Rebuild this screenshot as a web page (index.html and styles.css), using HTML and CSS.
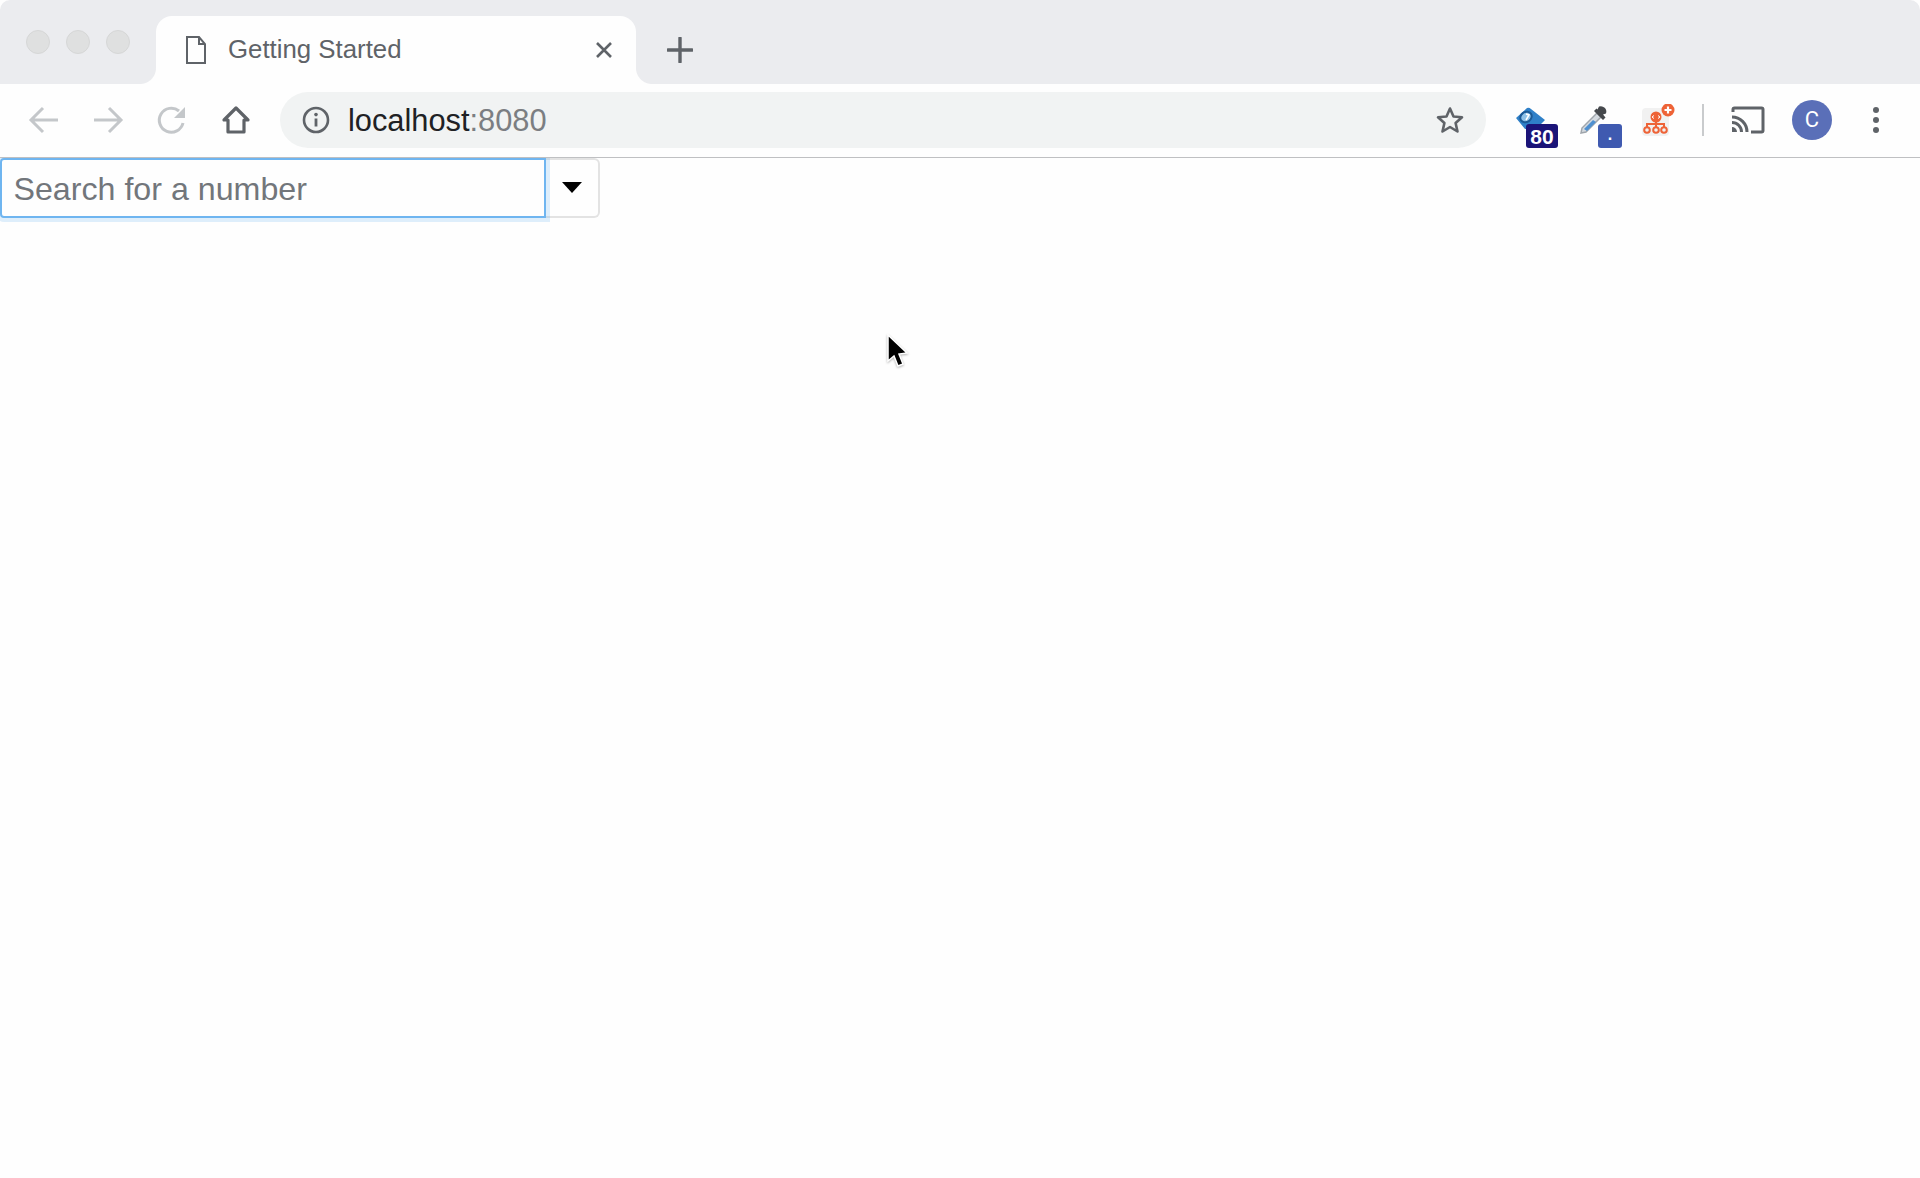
FILE: index.html
```html
<!DOCTYPE html>
<html lang="en">
<head>
<meta charset="utf-8">
<title>Getting Started</title>
<link rel="stylesheet" href="styles.css">
</head>
<body>
<header class="chrome">
  <div class="tabstrip">
    <div class="lights"><span class="light"></span><span class="light"></span><span class="light"></span></div>
    <div class="tab">
      <svg class="doc" width="20" height="28" viewBox="0 0 20 28"><path d="M1 1h12l6 7v19H1zM13 1v7h6" fill="none" stroke="#5f6368" stroke-width="2"/></svg>
      <span class="tab-title">Getting Started</span>
      <svg class="tab-close" width="18" height="18" viewBox="0 0 18 18"><path d="M2 2l14 14M16 2L2 16" stroke="#5f6368" stroke-width="2.6" fill="none"/></svg>
    </div>
    <svg class="newtab" width="26" height="26" viewBox="0 0 26 26"><path d="M13 1v24M1 13h24" stroke="#5f6368" stroke-width="3.4" fill="none" stroke-linecap="round"/></svg>
  </div>
  <div class="toolbar">
    <span class="btn"><svg width="32" height="32" viewBox="0 0 32 32"><path d="M30 16H4M15 4L3 16l12 12" stroke="#c4c7ca" stroke-width="3" fill="none"/></svg></span>
    <span class="btn"><svg width="32" height="32" viewBox="0 0 32 32"><path d="M2 16h26M17 4l12 12-12 12" stroke="#c4c7ca" stroke-width="3" fill="none"/></svg></span>
    <span class="btn"><svg width="32" height="32" viewBox="0 0 32 32"><path d="M27 19A12 12 0 1 1 23 7" stroke="#c4c7ca" stroke-width="3" fill="none"/><path d="M29 3v11H18z" fill="#c4c7ca"/></svg></span>
    <span class="btn"><svg width="30" height="30" viewBox="0 0 30 30"><path d="M15 3L3 15h4v12h16V15h4z" stroke="#5f6368" stroke-width="3.2" stroke-linejoin="round" fill="none"/></svg></span>
    <div class="omnibox">
      <svg class="info" width="28" height="28" viewBox="0 0 28 28"><circle cx="14" cy="14" r="12" stroke="#5f6368" stroke-width="2.6" fill="none"/><path d="M14 12.500V20.500" stroke="#5f6368" stroke-width="2.8"/><circle cx="14" cy="8.600" r="1.800" fill="#5f6368"/></svg>
      <span class="url"><span class="host">localhost</span><span class="port">:8080</span></span>
      <svg class="star" width="30" height="30" viewBox="0 0 30 30"><path d="M15 3.500l3.500 8 8.500.8-6.400 5.700 1.900 8.500-7.500-4.500-7.500 4.500 1.900-8.500L3 12.300l8.500-.8z" stroke="#5f6368" stroke-width="2.6" stroke-linejoin="round" fill="none"/></svg>
    </div>
    <div class="extensions">
      <span class="btn ext">
        <svg class="ico-lens" width="30" height="24" viewBox="0 0 30 24"><path d="M0 11L11 1q2-1 4 1l14 11-9 9H9z" fill="#2f80c8"/><ellipse cx="10" cy="10" rx="6" ry="5" transform="rotate(-35 10 10)" fill="#8fc2e8" stroke="#1c5a96" stroke-width="2"/><path d="M10 7l3 1-3 5" stroke="#fff" stroke-width="1.5" fill="none"/></svg>
        <span class="badge badge-navy">80</span>
      </span>
      <span class="btn ext">
        <svg class="ico-dropper" width="30" height="30" viewBox="0 0 30 30"><path d="M17 9L2 24l-1 5 5-1 15-15z" fill="#d4dae0" stroke="#a0a6ac" stroke-width="1.500"/><path d="M4 25l9-9 3 2-9 9z" fill="#4f90d0"/><path d="M14 7l9 9 2.500-2.500-2.500-3 3-1a5.500 5.500 0 0 0-7-7l-1.500 3-1-1z" fill="#45484c"/></svg>
        <span class="badge badge-blue">.</span>
      </span>
      <span class="btn ext">
        <svg class="ico-tree" width="33" height="32" viewBox="0 0 33 32"><rect x="0" y="4" width="27" height="28" rx="4" fill="#f1f1f1"/><g fill="none" stroke="#ee6337" stroke-width="2"><circle cx="5" cy="26" r="2.800"/><circle cx="14" cy="26" r="2.800"/><circle cx="22" cy="26" r="2.800"/><path d="M14 16v7M5 23v-3h17v3"/></g><circle cx="14" cy="13" r="5.500" fill="#ee6337"/><path d="M12 11.500l-2 1.500 2 1.500M16 11.500l2 1.500-2 1.500" stroke="#fff" fill="none"/><circle cx="26" cy="6" r="6.500" fill="#ee6337"/><path d="M26 2.500v7M22.500 6h7" stroke="#fff" stroke-width="2.200"/></svg>
      </span>
    </div>
    <span class="divider"></span>
    <span class="btn"><svg width="34" height="28" viewBox="0 0 34 28"><path d="M2 6V3.500A1.500 1.500 0 0 1 3.500 2h27A1.500 1.500 0 0 1 32 3.500v21a1.500 1.500 0 0 1-1.500 1.500H20" stroke="#5f6368" stroke-width="3" fill="none"/><path d="M1 11a15 15 0 0 1 15 15M1 16.500A9.500 9.500 0 0 1 10.500 26" stroke="#5f6368" stroke-width="3" fill="none"/><path d="M1 21a5 5 0 0 1 5 5H1z" fill="#5f6368"/></svg></span>
    <span class="btn"><span class="avatar">C</span></span>
    <span class="btn"><span class="dots"><i></i><i></i><i></i></span></span>
  </div>
</header>
<main class="page">
  <div class="combo">
    <input class="combo-input" type="text" placeholder="Search for a number">
    <button class="combo-toggle" type="button" aria-label="Toggle"><span class="caret"></span></button>
  </div>
  <svg class="cursor" width="24" height="36" viewBox="0 0 24 36"><path d="M3 1v26l6-5 4 10 5-2-4-10 8-1z" fill="#000" stroke="#fff" stroke-width="1.5"/></svg>
</main>
</body>
</html>
```
FILE: styles.css
```css
* { box-sizing: border-box; }
html, body { margin: 0; height: 100%; }
body {
  background: #fefefe;
  font-family: "Liberation Sans", Arial, sans-serif;
  display: flex;
  flex-direction: column;
  overflow: hidden;
}
.chrome { position: relative; z-index: 2; background: #fefefe; border-bottom: 1px solid #bfc0c2; }
.tabstrip { height: 84px; background: #ebecef; display: flex; align-items: flex-start; border-radius: 10px 10px 0 0; }
.lights { width: 156px; height: 84px; padding: 0 26px; display: flex; gap: 16px; align-items: center; }
.light { width: 24px; height: 24px; border-radius: 50%; background: #dfe0e0; border: 1px solid #d6d7d7; }
.tab {
  position: relative; width: 480px; height: 68px; margin-top: 16px; background: #fefefe;
  border-radius: 16px 16px 0 0; display: flex; align-items: center; padding: 0 23px 0 30px;
}
.tab::before, .tab::after { content: ""; position: absolute; bottom: 0; width: 16px; height: 16px; }
.tab::before { left: -16px; background: radial-gradient(circle at 0 0, #ebecef 15.5px, #fefefe 16.5px); }
.tab::after { right: -16px; background: radial-gradient(circle at 100% 0, #ebecef 15.5px, #fefefe 16.5px); }
.doc { flex: none; }
.tab-title { margin-left: 22px; padding-bottom: 2px; font-size: 25.8px; color: #5f6368; flex: 1; white-space: nowrap; }
.tab-close { flex: none; }
.newtab { margin: 37px 0 0 31px; flex: none; }
.toolbar { height: 73px; display: flex; align-items: center; padding: 0 12px 1px; background: #fefefe; }
.btn { position: relative; width: 64px; height: 56px; display: flex; align-items: center; justify-content: center; flex: none; }
.omnibox {
  flex: none; width: 1206px; height: 56px; margin-left: 12px; background: #f1f3f3; border-radius: 28px;
  display: flex; align-items: center; padding: 0 21px 0 22px;
}
.info { flex: none; }
.url { margin-left: 18px; padding-top: 2px; font-size: 30.8px; flex: 1; white-space: nowrap; }
.host { color: #202124; }
.port { color: #7b7e82; }
.star { flex: none; }
.extensions { display: flex; margin-left: 22px; }
.badge {
  position: absolute; left: 18px; bottom: 0; width: 32px; height: 24px; border-radius: 3px; color: #fff;
  font-size: 21px; font-weight: 700; line-height: 25px; text-align: center;
}
.badge-navy { background: #1b1478; }
.badge-blue { left: 26px; width: 24px; background: #3f5ab0; font-size: 16px; line-height: 22px; }
.ico-lens { margin: -3px 18px 0 0; }
.ico-dropper { margin: -2px 18px 0 0; }
.ico-tree { margin: 0 20px 0 0; }
.divider { width: 2px; height: 32px; margin-left: 2px; margin-right: 12px; background: #c9cbcd; flex: none; }
.avatar { width: 40px; height: 40px; border-radius: 50%; background: #5a6fb8; color: #fff; font-size: 22px; line-height: 40px; text-align: center; font-family: Roboto, sans-serif; }
.dots { display: flex; flex-direction: column; gap: 4px; }
.dots i { width: 6px; height: 6px; border-radius: 50%; background: #5f6368; display: block; }
.page { position: relative; flex: 1; }
.combo { display: flex; width: 600px; height: 60px; }
.combo-input {
  width: 546px; height: 60px; padding: 2px 11.5px 0; border: 2px solid #6fb5f0; outline: 0; border-radius: 4px 0 0 4px;
  font: 32.2px "Liberation Sans", Arial, sans-serif; color: #495057; background: #fefefe;
  box-shadow: 0 0 0 4px rgba(111, 181, 240, .22); position: relative; z-index: 1;
}
.combo-input::placeholder { color: #72767b; opacity: 1; }
.combo-toggle {
  width: 54px; height: 60px; padding: 0; border: 2px solid #e3e3e3; border-left: 0; border-radius: 0 6px 6px 0;
  background: #fefefe; display: flex; align-items: center; justify-content: center;
}
.caret { width: 0; height: 0; border-left: 10px solid transparent; border-right: 10px solid transparent; border-top: 11px solid #000; margin-top: -2px; }
.cursor { position: absolute; left: 885px; top: 176px; filter: drop-shadow(0 1px 1px rgba(0,0,0,.3)); }
```
